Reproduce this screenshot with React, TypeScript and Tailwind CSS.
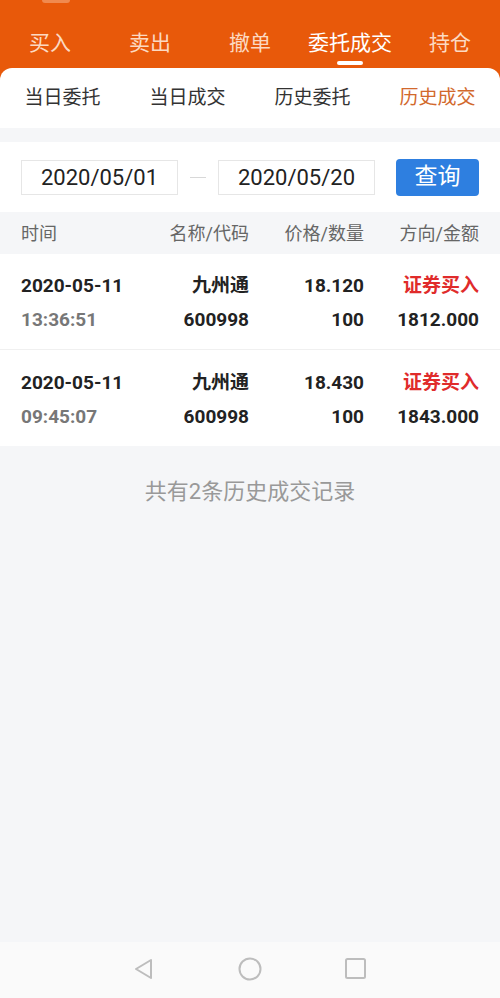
import React from "react";

const FONT = 'Roboto, "Noto Sans CJK SC", sans-serif';

const topTabs = ["买入", "卖出", "撤单", "委托成交", "持仓"];
const subTabs = ["当日委托", "当日成交", "历史委托", "历史成交"];

const deals = [
  { date: "2020-05-11", time: "13:36:51", name: "九州通", code: "600998", price: "18.120", qty: "100", dir: "证券买入", amount: "1812.000" },
  { date: "2020-05-11", time: "09:45:07", name: "九州通", code: "600998", price: "18.430", qty: "100", dir: "证券买入", amount: "1843.000" },
];

export default function App() {
  return (
    <div className="w-[500px] h-[998px] flex flex-col bg-[#f5f6f8] overflow-hidden" style={{ fontFamily: FONT }}>
      {/* Top orange header */}
      <header className="bg-[#e8590a] h-[80px] relative shrink-0">
        <div className="absolute left-[42px] top-[-6px] w-[28px] h-[9px] rounded-[3px] bg-[#f08a4f]" />
        <div className="grid grid-cols-5 pt-[28px]">
          {topTabs.map((t, i) => (
            <div key={t} className="flex flex-col items-center">
              <span className={`text-[21px] leading-[30px] ${i === 3 ? "text-white" : "text-[#fcd9c2]"}`}>{t}</span>
              <span className={`mt-[3px] h-[4px] w-[26px] rounded-full ${i === 3 ? "bg-white" : "bg-transparent"}`} />
            </div>
          ))}
        </div>
      </header>

      {/* Sub tabs */}
      <div className="relative -mt-[12px] bg-white rounded-t-[12px] h-[60px] grid grid-cols-4 items-center shrink-0">
        {subTabs.map((t, i) => (
          <span key={t} className={`text-center text-[19px] ${i === 3 ? "text-[#d2692d]" : "text-[#333]"}`}>{t}</span>
        ))}
      </div>

      {/* Date filter */}
      <div className="mt-[14px] bg-white h-[70px] flex items-center px-[21px] shrink-0">
        <div className="w-[157px] h-[35px] border border-[#e6e6e6] flex items-center justify-center text-[22px] text-[#222]">2020/05/01</div>
        <div className="w-[40px] flex justify-center">
          <span className="w-[16px] h-px bg-[#d8d8d8]" />
        </div>
        <div className="w-[157px] h-[35px] border border-[#e6e6e6] flex items-center justify-center text-[22px] text-[#222]">2020/05/20</div>
        <button className="ml-auto w-[83px] h-[37px] rounded-[4px] bg-[#2e7fe0] text-white text-[23px]">查询</button>
      </div>

      {/* Column header */}
      <div className="h-[42px] flex items-center px-[21px] text-[18px] text-[#666] shrink-0">
        <span className="flex-1">时间</span>
        <span className="w-[130px] text-right">名称/代码</span>
        <span className="w-[115px] text-right">价格/数量</span>
        <span className="w-[115px] text-right">方向/金额</span>
      </div>

      {/* Rows */}
      <div className="bg-white shrink-0">
        {deals.map((d, i) => (
          <div key={i} className={`h-[96px] flex items-center px-[21px] pt-[3px] font-bold text-[19px] text-[#222] whitespace-nowrap ${i === 0 ? "border-b border-[#f0f0f0]" : ""}`}>
            <div className="flex-1 min-w-0 flex flex-col gap-[8px]">
              <span className="leading-[26px]">{d.date}</span>
              <span className="leading-[26px] text-[#777]">{d.time}</span>
            </div>
            <div className="w-[130px] flex flex-col gap-[8px] text-right">
              <span className="leading-[26px]">{d.name}</span>
              <span className="leading-[26px]">{d.code}</span>
            </div>
            <div className="w-[115px] flex flex-col gap-[8px] text-right">
              <span className="leading-[26px]">{d.price}</span>
              <span className="leading-[26px]">{d.qty}</span>
            </div>
            <div className="w-[115px] flex flex-col gap-[8px] text-right">
              <span className="leading-[26px] text-[#e02b2b]">{d.dir}</span>
              <span className="leading-[26px]">{d.amount}</span>
            </div>
          </div>
        ))}
      </div>

      <p className="mt-[29px] text-center text-[22px] text-[#999]">共有2条历史成交记录</p>

      <div className="flex-1" />

      {/* Android nav bar */}
      <nav className="h-[56px] bg-[#fafafa] flex items-center justify-center gap-[80px] shrink-0">
        <svg width="26" height="26" viewBox="0 0 26 26" fill="none" stroke="#bdbdbd" strokeWidth="2" strokeLinejoin="round">
          <path d="M20 3 L5 12 L20 21 Z" />
        </svg>
        <svg width="26" height="26" viewBox="0 0 26 26" fill="none" stroke="#bdbdbd" strokeWidth="2">
          <circle cx="13" cy="12" r="10.5" />
        </svg>
        <svg width="26" height="26" viewBox="0 0 26 26" fill="none" stroke="#bdbdbd" strokeWidth="2">
          <rect x="3" y="2" width="19" height="19" rx="1.5" />
        </svg>
      </nav>
    </div>
  );
}
